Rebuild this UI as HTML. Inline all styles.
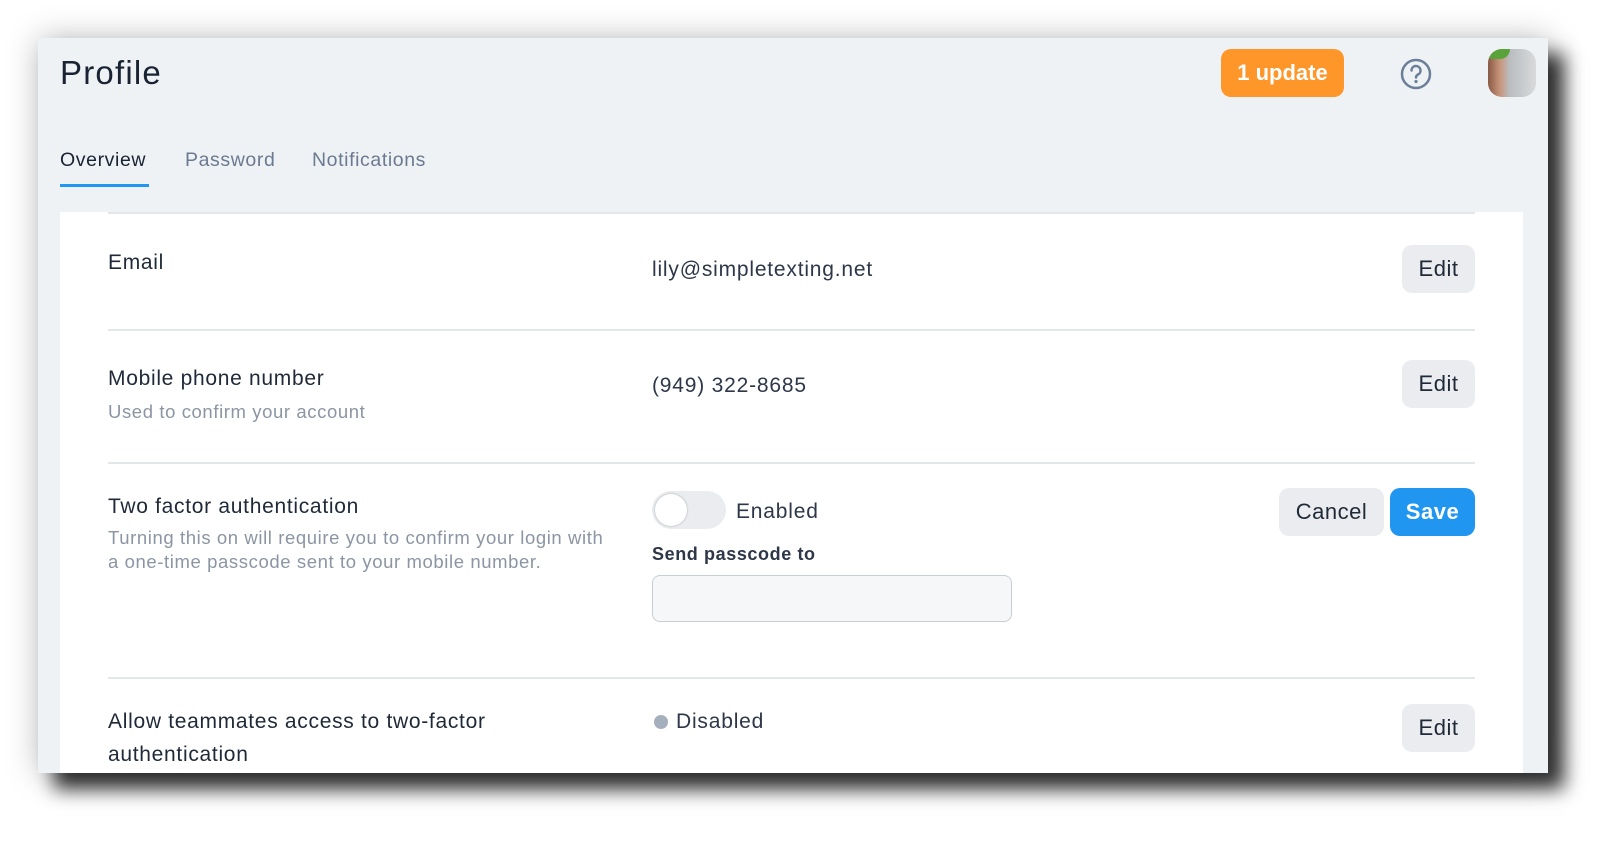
<!DOCTYPE html>
<html><head><style>
*{margin:0;padding:0;box-sizing:border-box}
body{width:1616px;height:841px;background:#fff;position:relative;overflow:hidden;font-family:"Liberation Sans",sans-serif;color:#1f2937}
.win{position:absolute;left:38px;top:38px;width:1510px;height:735px;background:#eff2f5;box-shadow:16px 16px 18px rgba(0,0,0,.8),0 0 30px rgba(0,0,0,.25);overflow:hidden}
.a{position:absolute;white-space:nowrap}
.card{position:absolute;left:22px;top:174px;width:1463px;height:600px;background:#fff}
.line{position:absolute;left:48px;width:1367px;height:2px;background:#e3e6ea}
.btn{position:absolute;background:#eaecef;border-radius:10px;font-size:22px;color:#1f2937;display:flex;align-items:center;justify-content:center;letter-spacing:.5px}
.lbl{font-size:21px;color:#1f2937;letter-spacing:.7px}
.sub{font-size:18.5px;color:#8b95a3;letter-spacing:.6px}
.val{font-size:21px;color:#2d3748;letter-spacing:.8px}
</style></head><body>
<div class="win">
 <div class="a" style="left:22px;top:16px;font-size:33px;color:#1a2333;letter-spacing:1.2px">Profile</div>
 <div class="a" style="left:1183px;top:11px;width:123px;height:48px;background:#fe962a;border-radius:10px;color:#fff;font-size:22px;font-weight:bold;display:flex;align-items:center;justify-content:center">1 update</div>
 <svg class="a" style="left:1362px;top:20px" width="32" height="32" viewBox="0 0 32 32"><circle cx="16" cy="16" r="14" fill="none" stroke="#6b7f99" stroke-width="2.5"/><path d="M11.5 12.5a4.5 4.5 0 1 1 6.5 4c-1.4.8-2 1.6-2 3" fill="none" stroke="#6b7f99" stroke-width="2.5" stroke-linecap="round"/><circle cx="16" cy="23.5" r="1.6" fill="#6b7f99"/></svg>
 <div class="a" style="left:1450px;top:11px;width:48px;height:48px;border-radius:14px;background:linear-gradient(90deg,#8a5a45 0%,#c9957c 25%,#b9bdbf 45%,#d8dadb 100%);overflow:hidden"><div style="position:absolute;left:0;top:0;width:22px;height:10px;background:#5aa33a;border-radius:0 0 10px 4px"></div></div>
 <div class="a" style="left:22px;top:111px;font-size:19.5px;color:#1a2333;letter-spacing:.6px">Overview</div>
 <div class="a" style="left:22px;top:146px;width:89px;height:3px;background:#2196f3"></div>
 <div class="a" style="left:147px;top:111px;font-size:19.5px;color:#6b7a90;letter-spacing:.6px">Password</div>
 <div class="a" style="left:274px;top:111px;font-size:19.5px;color:#6b7a90;letter-spacing:.6px">Notifications</div>
 <div class="card">
  <div class="line" style="top:0"></div>
  <div class="a lbl" style="left:48px;top:39px">Email</div>
  <div class="a val" style="left:592px;top:46px">lily@simpletexting.net</div>
  <div class="btn" style="left:1342px;top:33px;width:73px;height:48px">Edit</div>
  <div class="line" style="top:117px"></div>
  <div class="a lbl" style="left:48px;top:155px">Mobile phone number</div>
  <div class="a sub" style="left:48px;top:189px">Used to confirm your account</div>
  <div class="a val" style="left:592px;top:162px">(949) 322-8685</div>
  <div class="btn" style="left:1342px;top:148px;width:73px;height:48px">Edit</div>
  <div class="line" style="top:250px"></div>
  <div class="a lbl" style="left:48px;top:283px">Two factor authentication</div>
  <div class="a sub" style="left:48px;top:314px;line-height:24px">Turning this on will require you to confirm your login with<br>a one-time passcode sent to your mobile number.</div>
  <div class="a" style="left:592px;top:279px;width:74px;height:38px;border-radius:19px;background:#eaecef"><div style="position:absolute;left:3px;top:3px;width:32px;height:32px;border-radius:50%;background:#fff;box-shadow:0 0 2px rgba(0,0,0,.3)"></div></div>
  <div class="a val" style="left:676px;top:288px">Enabled</div>
  <div class="a" style="left:592px;top:332px;font-size:18px;font-weight:bold;color:#2d3748;letter-spacing:.6px">Send passcode to</div>
  <div class="a" style="left:592px;top:363px;width:360px;height:47px;border:1px solid #c9ced6;border-radius:8px;background:#f6f7f9"></div>
  <div class="btn" style="left:1219px;top:276px;width:105px;height:48px">Cancel</div>
  <div class="btn" style="left:1330px;top:276px;width:85px;height:48px;background:#2196f0;color:#fff;font-weight:bold">Save</div>
  <div class="line" style="top:465px"></div>
  <div class="a lbl" style="left:48px;top:493px;line-height:33px">Allow teammates access to two-factor<br>authentication</div>
  <div class="a" style="left:594px;top:503px;width:14px;height:14px;border-radius:50%;background:#a6afbd"></div>
  <div class="a val" style="left:616px;top:498px">Disabled</div>
  <div class="btn" style="left:1342px;top:492px;width:73px;height:48px">Edit</div>
 </div>
</div>
</body></html>
